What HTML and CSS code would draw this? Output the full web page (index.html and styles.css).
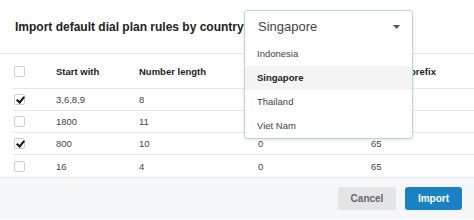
FILE: index.html
```html
<!DOCTYPE html>
<html lang="en">
<head>
    <meta charset="UTF-8">
    <title>Import dial plan rules</title>
    <link rel="stylesheet" href="styles.css">
</head>
<body>
    <div class="modal">
        <div class="modal-header">
            <h1>Import default dial plan rules by country</h1>
            <div class="country-select">
                <div class="select-value">
                    <span>Singapore</span>
                    <svg class="caret" width="7" height="4" viewBox="0 0 7 4"><path d="M0 0h7L3.5 4z" fill="#555"/></svg>
                </div>
                <ul class="select-menu">
                    <li>Indonesia</li>
                    <li class="active">Singapore</li>
                    <li>Thailand</li>
                    <li>Viet Nam</li>
                </ul>
            </div>
        </div>
        <table class="rules">
            <thead>
                <tr>
                    <th class="col-check"><span class="check"></span></th>
                    <th class="col-start">Start with</th>
                    <th class="col-length">Number length</th>
                    <th class="col-remove">Remove digits</th>
                    <th>Country prefix</th>
                </tr>
            </thead>
            <tbody>
                <tr>
                    <td class="col-check"><span class="check checked"></span></td>
                    <td>3,6,8,9</td>
                    <td>8</td>
                    <td>0</td>
                    <td>65</td>
                </tr>
                <tr>
                    <td class="col-check"><span class="check"></span></td>
                    <td>1800</td>
                    <td>11</td>
                    <td>0</td>
                    <td>65</td>
                </tr>
                <tr>
                    <td class="col-check"><span class="check checked"></span></td>
                    <td>800</td>
                    <td>10</td>
                    <td>0</td>
                    <td>65</td>
                </tr>
                <tr>
                    <td class="col-check"><span class="check"></span></td>
                    <td>16</td>
                    <td>4</td>
                    <td>0</td>
                    <td>65</td>
                </tr>
            </tbody>
        </table>
        <div class="modal-footer">
            <button class="btn btn-cancel">Cancel</button>
            <button class="btn btn-primary">Import</button>
        </div>
    </div>
</body>
</html>
```

FILE: styles.css
```css
body {
    margin: 0;
    font-family: "Liberation Sans", Arial, sans-serif;
    color: #333;
    background-color: #fff;
}
.modal {
    width: 474px;
    height: 220px;
    overflow: hidden;
}
.modal-header {
    height: 54px;
    border-bottom: 1px solid #e6e6e6;
    display: flex;
    align-items: center;
    padding-left: 15px;
    box-sizing: border-box;
}
.modal-header h1 {
    margin: 0;
    font-size: 12px;
    font-weight: bold;
    color: #222;
}
.country-select {
    position: absolute;
    left: 244px;
    top: 10px;
    width: 167px;
    background-color: #fff;
    border: 1px solid #b9d7dc;
    border-radius: 3px;
    box-shadow: 0 1px 3px rgba(0, 0, 0, 0.12);
    z-index: 2;
}
.select-value {
    height: 31px;
    display: flex;
    align-items: center;
    justify-content: space-between;
    padding: 0 12px 0 13px;
    font-size: 13px;
    color: #444;
}
.select-menu {
    list-style: none;
    margin: 0;
    padding: 0;
}
.select-menu li {
    height: 24px;
    line-height: 24px;
    padding-left: 12px;
    font-size: 9.5px;
    color: #444;
}
.select-menu li.active {
    background-color: #f4f4f4;
    font-weight: bold;
    color: #222;
}
.rules {
    margin-left: 13px;
    width: 461px;
    border-collapse: collapse;
    font-size: 9.5px;
}
.rules th {
    height: 34px;
    text-align: left;
    font-weight: bold;
    color: #222;
    border-bottom: 1px solid #e6e6e6;
    padding: 0;
}
.rules td {
    height: 21px;
    border-bottom: 1px solid #e6e6e6;
    padding: 0;
    color: #444;
}
.rules tbody tr:last-child td {
    border-bottom: none;
    height: 22px;
}
.col-check {
    width: 43px;
}
.col-start {
    width: 83px;
}
.col-length {
    width: 119px;
}
.col-remove {
    width: 113px;
}
.check {
    display: block;
    margin-left: 1px;
    width: 9px;
    height: 9px;
    border: 1px solid #cfcfcf;
    border-radius: 2px;
    background-color: #fff;
    position: relative;
}
.check.checked::after {
    content: "";
    position: absolute;
    left: 3px;
    top: 0px;
    width: 3px;
    height: 6px;
    border: solid #111;
    border-width: 0 2px 2px 0;
    transform: rotate(40deg);
}
.modal-footer {
    height: 42px;
    background-color: #f6f7f9;
    border-top: 1px solid #e6e6e6;
    display: flex;
    align-items: center;
    justify-content: flex-end;
    gap: 9px;
    padding-right: 12px;
    box-sizing: border-box;
}
.btn {
    height: 23px;
    width: 58px;
    border: none;
    border-radius: 3px;
    font-family: "Liberation Sans", Arial, sans-serif;
    font-size: 10px;
    font-weight: bold;
    padding: 0;
}
.btn-cancel {
    background-color: #e4e5e7;
    color: #666;
}
.btn-primary {
    width: 57px;
    background-color: #1a82c4;
    color: #fff;
}
```
